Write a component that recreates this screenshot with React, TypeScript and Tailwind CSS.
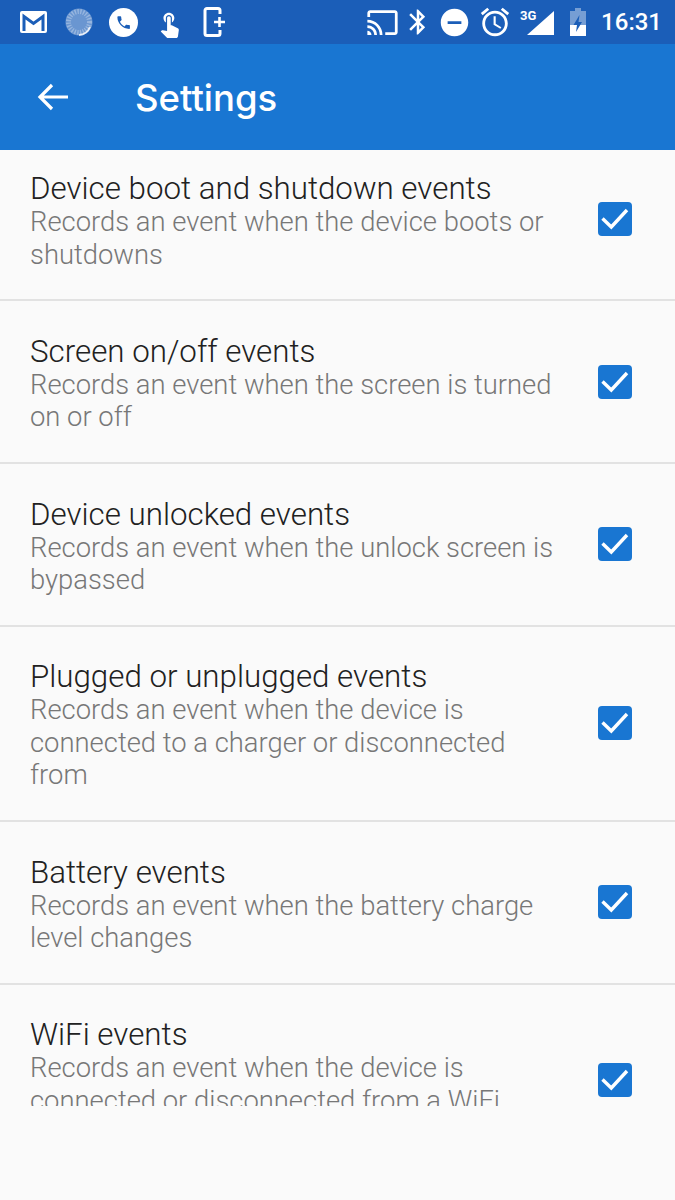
const ROWS = [
  { title: "Device boot and shutdown events", lines: ["Records an event when the device boots or", "shutdowns"] },
  { title: "Screen on/off events", lines: ["Records an event when the screen is turned", "on or off"] },
  { title: "Device unlocked events", lines: ["Records an event when the unlock screen is", "bypassed"] },
  { title: "Plugged or unplugged events", lines: ["Records an event when the device is", "connected to a charger or disconnected", "from"] },
  { title: "Battery events", lines: ["Records an event when the battery charge", "level changes"] },
  { title: "WiFi events", lines: ["Records an event when the device is", "connected or disconnected from a WiFi"] },
];

function StatusIcon({ d, className }: { d: string; className: string }) {
  return (
    <svg viewBox="0 0 24 24" fill="#fff" className={className}>
      <path d={d} />
    </svg>
  );
}

function StatusBar() {
  return (
    <div className="h-[44px] bg-[#1b5eb8] flex items-center justify-between pl-[20px] pr-[13px] text-white shrink-0">
      <div className="flex items-center">
        {/* gmail */}
        <svg viewBox="0 0 27 22" className="w-[27px] h-[22px]">
          <rect x="0" y="0" width="27" height="22" rx="2" fill="#fff" />
          <path d="M4 20V5.5l9.5 7 9.5-7V20" fill="none" stroke="#1b5eb8" strokeWidth="3" />
        </svg>
        {/* sync spinner */}
        <svg viewBox="0 0 28 28" className="w-[28px] h-[28px] ml-[18px]">
          <circle cx="14" cy="14" r="13.5" fill="#fff" opacity="0.35" />
          <circle cx="14" cy="14" r="10.5" fill="none" stroke="#fff" strokeWidth="5" strokeDasharray="1.4 1.4" opacity="0.3" />
          <path d="M25 19a12.5 12.5 0 0 1-11 8" fill="none" stroke="#fff" strokeWidth="2" opacity="0.8" />
        </svg>
        {/* phone */}
        <svg viewBox="0 0 30 30" className="w-[29px] h-[29px] ml-[16px]">
          <circle cx="15" cy="15" r="15" fill="#fff" />
          <path
            transform="translate(6.5 6.5) scale(0.72)"
            fill="#1b5eb8"
            d="M6.62 10.79c1.44 2.83 3.76 5.14 6.59 6.59l2.2-2.2c.27-.27.67-.36 1.02-.24 1.12.37 2.33.57 3.57.57.55 0 1 .45 1 1V20c0 .55-.45 1-1 1-9.39 0-17-7.61-17-17 0-.55.45-1 1-1h3.5c.55 0 1 .45 1 1 0 1.25.2 2.45.57 3.57.11.35.03.74-.25 1.02l-2.2 2.2z"
          />
        </svg>
        <StatusIcon
          className="w-[29px] h-[29px] ml-[17px] mt-[3px]"
          d="M9 11.24V7.5C9 6.12 10.12 5 11.5 5S14 6.12 14 7.5v3.74c1.21-.81 2-2.18 2-3.74C16 5.01 13.99 3 11.5 3S7 5.01 7 7.5c0 1.56.79 2.93 2 3.74zm9.84 4.63l-4.54-2.26c-.17-.07-.35-.11-.54-.11H13v-6c0-.83-.67-1.5-1.5-1.5S10 6.67 10 7.5v10.74l-3.43-.72c-.08-.01-.15-.03-.24-.03-.31 0-.59.13-.79.33l-.79.8 4.94 4.94c.27.27.65.44 1.06.44h6.79c.75 0 1.33-.55 1.44-1.28l.75-5.27c.01-.07.02-.14.02-.2 0-.62-.38-1.16-.91-1.38z"
        />
        {/* device with plus */}
        <svg viewBox="0 0 23 30" className="w-[23px] h-[30px] ml-[19px]" fill="none" stroke="#fff" strokeWidth="3">
          <path d="M17 7V3.5a2 2 0 0 0-2-2H4a2 2 0 0 0-2 2v23a2 2 0 0 0 2 2h11a2 2 0 0 0 2-2V23" />
          <path d="M11 15h11M16.5 10v10" strokeWidth="2.6" />
        </svg>
      </div>
      <div className="flex items-center">
        <StatusIcon
          className="w-[33px] h-[33px]"
          d="M1 18v3h3c0-1.66-1.34-3-3-3zm0-4v2c2.76 0 5 2.24 5 5h2c0-3.87-3.13-7-7-7zm0-4v2c4.97 0 9 4.03 9 9h2c0-6.08-4.93-11-11-11zm20-7H3c-1.1 0-2 .9-2 2v3h2V5h18v14h-7v2h7c1.1 0 2-.9 2-2V5c0-1.1-.9-2-2-2z"
        />
        <StatusIcon
          className="w-[30px] h-[30px] ml-[4px]"
          d="M17.71 7.71L12 2h-1v7.59L6.41 5 5 6.41 10.59 12 5 17.59 6.41 19 11 14.41V22h1l5.71-5.71-4.3-4.29 4.3-4.29zM13 5.83l1.88 1.88L13 9.59V5.83zm1.88 10.46L13 18.17v-3.76l1.88 1.88z"
        />
        <StatusIcon
          className="w-[33px] h-[33px] ml-[5px]"
          d="M12 2C6.48 2 2 6.48 2 12s4.48 10 10 10 10-4.48 10-10S17.52 2 12 2zm5 11H7v-2h10v2z"
        />
        <StatusIcon
          className="w-[34px] h-[34px] ml-[7px]"
          d="M22 5.72l-4.6-3.86-1.29 1.53 4.6 3.86L22 5.72zM7.88 3.39L6.6 1.86 2 5.71l1.29 1.53 4.59-3.85zM12.5 8H11v6l4.75 2.85.75-1.23-4-2.37V8zM12 4c-4.97 0-9 4.03-9 9s4.03 9 9 9 9-4.03 9-9-4.03-9-9-9zm0 16c-3.87 0-7-3.13-7-7s3.13-7 7-7 7 3.13 7 7-3.13 7-7 7z"
        />
        {/* 3G + signal */}
        <div className="relative w-[34px] h-[28px] ml-[8px]">
          <svg viewBox="0 0 34 28" className="w-[34px] h-[28px]">
            <path d="M7 27L34 3v24z" fill="#fff" />
          </svg>
          <span className="absolute left-0 top-[1px] text-[13px] leading-[13px] font-bold">3G</span>
        </div>
        {/* battery charging */}
        <svg viewBox="0 0 16 28" className="w-[16px] h-[28px] ml-[16px]">
          <path d="M5 0h6v3h5v25H0V3h5z" fill="#fff" opacity="0.4" />
          <path d="M0 17h16v11H0z" fill="#fff" />
          <path d="M9.5 7L3.5 17h3.5l-1 7 6-10H8.5z" fill="#1b5eb8" />
        </svg>
        <span className="ml-[15px] text-[24px] leading-none font-medium">16:31</span>
      </div>
    </div>
  );
}

function Row({ title, lines, last }: { title: string; lines: string[]; last: boolean }) {
  return (
    <div className={`flex items-center pl-[30px] pr-[43px] ${last ? "h-[191px]" : "border-b-2 border-[#e2e2e2]"}`}>
      <div className={`flex-1 pt-[33.5px] pb-[28.25px] ${last ? "self-start" : ""}`}>
        <p className="text-[31.3px] leading-[34px] text-[#212121] font-light">{title}</p>
        {lines.map((l) => (
          <p key={l} className="text-[27.4px] leading-[32.5px] text-[#777777] font-light whitespace-nowrap">{l}</p>
        ))}
      </div>
      <div className="w-[34px] h-[34px] rounded-[4px] bg-[#1976d2] shrink-0">
        <svg viewBox="0 0 34 34" className="w-[34px] h-[34px]" fill="none" stroke="#fff" strokeWidth="3.4">
          <path d="M4.5 16.5l8.8 8.5L29 8" />
        </svg>
      </div>
    </div>
  );
}

export default function App() {
  return (
    <div className="w-[675px] h-[1200px] bg-[#fafafa] flex flex-col overflow-hidden font-['Roboto',sans-serif]">
      <StatusBar />
      <div className="h-[106px] bg-[#1976d2] flex items-center shrink-0 text-white">
        <svg viewBox="0 0 32 28" className="w-[32px] h-[28px] ml-[37px]" fill="none" stroke="#fff" strokeWidth="3.2">
          <path d="M31 14H3M15 2L3 14l12 12" />
        </svg>
        <span className="ml-[66px] mt-[2px] text-[36.5px] leading-none font-['Inter',sans-serif] font-medium">Settings</span>
      </div>
      <div className="h-[956px] overflow-hidden">
        <div className="-mt-[11.5px]">
          {ROWS.map((r, i) => (
            <Row key={r.title} title={r.title} lines={r.lines} last={i === ROWS.length - 1} />
          ))}
        </div>
      </div>
    </div>
  );
}
